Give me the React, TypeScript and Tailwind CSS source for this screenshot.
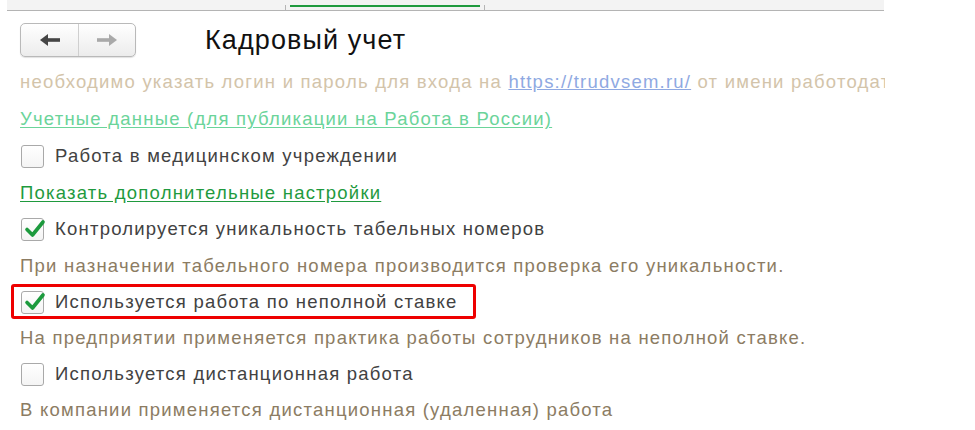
import React from "react";

function Arrow({ dir, color }: { dir: "left" | "right"; color: string }) {
  return (
    <svg width="22" height="14" viewBox="0 0 22 14" className={dir === "right" ? "-scale-x-100" : ""}>
      <polygon points="1,7 9,1 9,13" fill={color} />
      <rect x="8" y="5.2" width="13" height="3.6" fill={color} />
    </svg>
  );
}

function Checkbox({ checked }: { checked?: boolean }) {
  return (
    <div className="w-[23px] h-[23px] shrink-0 rounded-[3px] border border-[#a9a9a9] bg-gradient-to-b from-white to-[#f4f4f4] relative">
      {checked && (
        <svg width="24" height="22" viewBox="0 0 24 22" className="absolute left-[1px] top-[-1px]">
          <path d="M4 11.5 L9.5 17 L20 4" fill="none" stroke="#1c9a3d" strokeWidth="3.6" strokeLinecap="round" strokeLinejoin="round" />
        </svg>
      )}
    </div>
  );
}

export default function App() {
  return (
    <div className="w-[975px] h-[430px] bg-white overflow-hidden relative" style={{ fontFamily: '"Liberation Sans", Arial, sans-serif' }}>
      {/* top tab strip */}
      <div className="ml-[7px] w-[877px] h-[11px] bg-[#f3f3f3] border-b border-[#b4b4b4] flex items-end">
        <div className="w-[278px]" />
        <div className="w-px h-[5px] bg-[#b4b4b4]" />
        <div className="w-[198px] h-full flex items-start justify-center pt-[5px]">
          <div className="w-[190px] h-[2px] bg-[#1f9a3e]" />
        </div>
        <div className="w-px h-[5px] bg-[#b4b4b4]" />
      </div>

      {/* header */}
      <div className="flex items-center mt-[12px] h-[34px]">
        <div className="ml-[20px] w-[116px] h-[34px] rounded-[5px] border border-[#b9b9b9] bg-gradient-to-b from-white to-[#ececec] shadow-[0_1px_1px_rgba(0,0,0,0.12)] flex">
          <div className="w-[58px] h-full flex items-center justify-center border-r border-[#cfcfcf]">
            <Arrow dir="left" color="#454545" />
          </div>
          <div className="flex-1 h-full flex items-center justify-center">
            <Arrow dir="right" color="#a9a9a9" />
          </div>
        </div>
        <div className="ml-[69px] text-[27px] tracking-[1.1px] text-[#111] leading-none">Кадровый учет</div>
      </div>

      {/* content */}
      <div className="w-[885px] overflow-hidden pl-[20px] mt-[6px] text-[18.5px] tracking-[1.22px] leading-none">
        <div className="h-[38px] flex items-center text-[#d3c4aa] whitespace-nowrap">
          необходимо указать логин и пароль для входа на&nbsp;
          <span className="text-[#8fa9e2] underline">https://trudvsem.ru/</span>
          &nbsp;от имени работодат
        </div>
        <div className="h-[37px] flex items-center">
          <span className="text-[#6bd49a] underline underline-offset-2">Учетные данные (для публикации на Работа в России)</span>
        </div>
        <div className="h-[37px] flex items-center gap-[11px] text-[#424242]">
          <div className="ml-[1px]"><Checkbox /></div>
          <span>Работа в медицинском учреждении</span>
        </div>
        <div className="h-[36px] flex items-center">
          <span className="text-[#1f9a3e] underline underline-offset-2">Показать дополнительные настройки</span>
        </div>
        <div className="h-[37px] flex items-center gap-[11px] text-[#424242]">
          <div className="ml-[1px]"><Checkbox checked /></div>
          <span>Контролируется уникальность табельных номеров</span>
        </div>
        <div className="h-[37px] flex items-center text-[#8c7c63]">
          При назначении табельного номера производится проверка его уникальности.
        </div>
        <div className="h-[35px] flex items-center gap-[11px] text-[#424242] relative">
          <div className="ml-[1px]"><Checkbox checked /></div>
          <span>Используется работа по неполной ставке</span>
          <div className="absolute left-[-9px] top-[-1px] w-[465px] h-[35px] border-[3px] border-[#ee0000] rounded-[3px]" />
        </div>
        <div className="h-[36px] flex items-center text-[#8c7c63]">
          На предприятии применяется практика работы сотрудников на неполной ставке.
        </div>
        <div className="h-[36px] flex items-center gap-[11px] text-[#424242]">
          <div className="ml-[1px]"><Checkbox /></div>
          <span>Используется дистанционная работа</span>
        </div>
        <div className="h-[36px] flex items-center text-[#8c7c63]">
          В компании применяется дистанционная (удаленная) работа
        </div>
      </div>
    </div>
  );
}
